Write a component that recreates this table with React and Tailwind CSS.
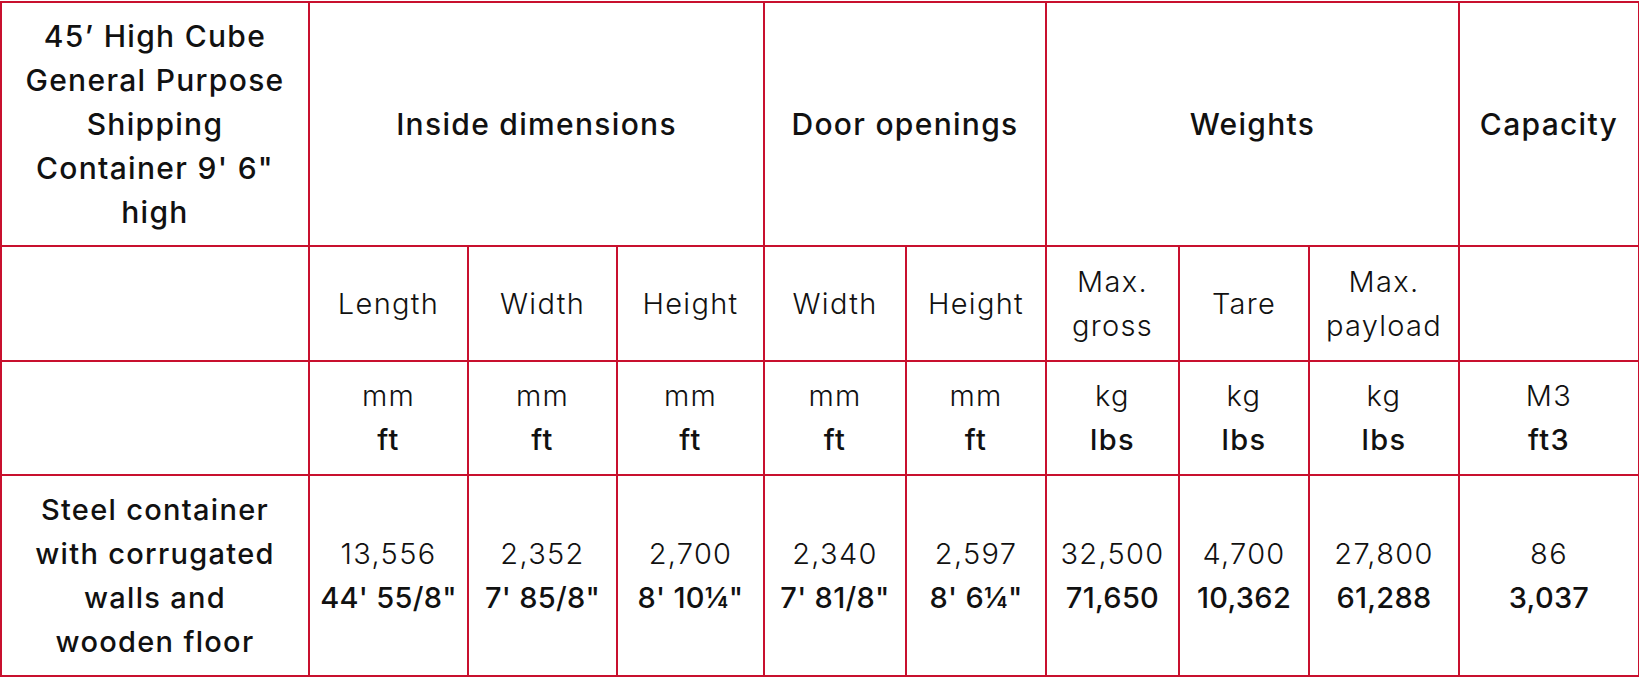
const border = "border-2 border-[#c8102e]";

const units = [
  ["mm", "ft"],
  ["mm", "ft"],
  ["mm", "ft"],
  ["mm", "ft"],
  ["mm", "ft"],
  ["kg", "lbs"],
  ["kg", "lbs"],
  ["kg", "lbs"],
  ["M3", "ft3"],
];

const values = [
  ["13,556", "44' 55/8\""],
  ["2,352", "7' 85/8\""],
  ["2,700", "8' 10¼\""],
  ["2,340", "7' 81/8\""],
  ["2,597", "8' 6¼\""],
  ["32,500", "71,650"],
  ["4,700", "10,362"],
  ["27,800", "61,288"],
  ["86", "3,037"],
];

const subHeads = [
  "Length",
  "Width",
  "Height",
  "Width",
  "Height",
  <>Max.<br />gross</>,
  "Tare",
  <>Max.<br />payload</>,
  "",
];

function Cell({ children, className = "", ...rest }) {
  return (
    <td className={`${border} text-center align-middle p-0 ${className}`} {...rest}>
      {children}
    </td>
  );
}

export default function App() {
  return (
    <div className="bg-white w-[1639px] h-[677px] overflow-hidden font-['Inter',sans-serif] text-[#111] text-[29px] tracking-[0.045em] leading-[44px]">
      <table className="table-fixed border-collapse w-[1638px] mt-px">
        <colgroup>
          <col className="w-[308px]" />
          <col className="w-[159px]" />
          <col className="w-[149px]" />
          <col className="w-[147px]" />
          <col className="w-[142px]" />
          <col className="w-[140px]" />
          <col className="w-[133px]" />
          <col className="w-[130px]" />
          <col className="w-[150px]" />
          <col className="w-[180px]" />
        </colgroup>
        <tbody>
          <tr className="h-[244px] font-medium text-[30px]">
            <Cell>
              45’ High Cube<br />General Purpose<br />Shipping<br />Container 9' 6"<br />high
            </Cell>
            <Cell colSpan={3}>Inside dimensions</Cell>
            <Cell colSpan={2}>Door openings</Cell>
            <Cell colSpan={3}>Weights</Cell>
            <Cell>Capacity</Cell>
          </tr>
          <tr className="h-[115px] font-light">
            <Cell></Cell>
            {subHeads.map((h, i) => (
              <Cell key={i}>{h}</Cell>
            ))}
          </tr>
          <tr className="h-[114px]">
            <Cell></Cell>
            {units.map(([a, b], i) => (
              <Cell key={i}>
                <div className="font-light">{a}</div>
                <div className="font-medium">{b}</div>
              </Cell>
            ))}
          </tr>
          <tr className="h-[201px]">
            <Cell className="font-medium">
              Steel container<br />with corrugated<br />walls and<br />wooden floor
            </Cell>
            {values.map(([a, b], i) => (
              <Cell key={i}>
                <div className="font-light">{a}</div>
                <div className="font-medium tracking-[0.01em]">{b}</div>
              </Cell>
            ))}
          </tr>
        </tbody>
      </table>
    </div>
  );
}
